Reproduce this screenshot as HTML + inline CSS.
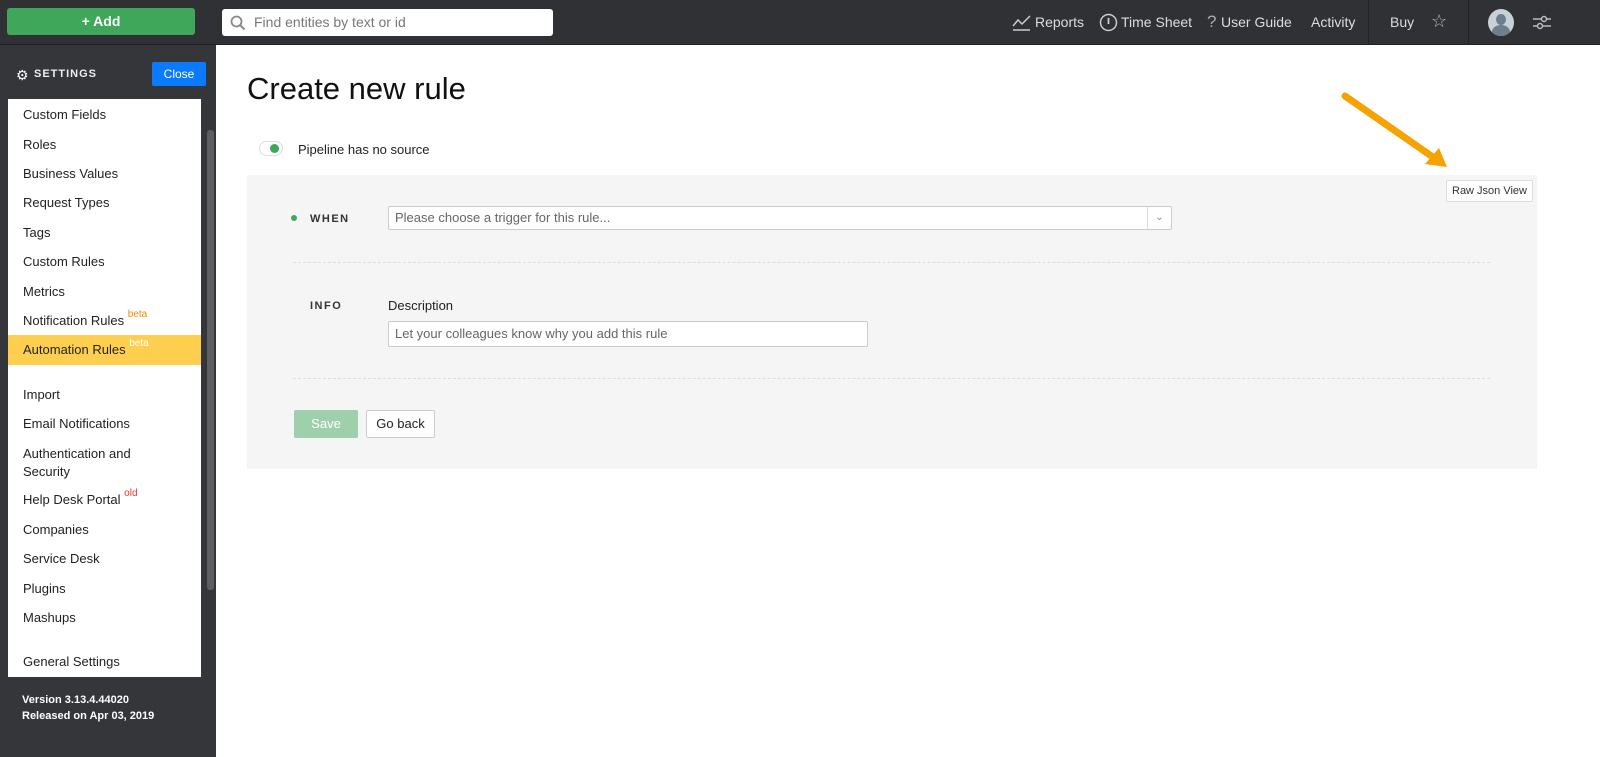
<!DOCTYPE html>
<html><head><style>
*{box-sizing:border-box;margin:0;padding:0}
body{width:1600px;height:757px;overflow:hidden;font-family:"Liberation Sans",sans-serif;font-size:13px;color:#222;background:#fff;position:relative}
.top{position:absolute;left:0;top:0;width:1600px;height:45px;background:#303135;border-bottom:1px solid #222}
.side{position:absolute;left:0;top:45px;width:216px;height:712px;background:#35363a}
.add{position:absolute;left:7px;top:8px;width:188px;height:27px;background:#3fa75a;border-radius:3px;color:#fff;font-weight:bold;font-size:14px;text-align:center;line-height:27px}
.search{position:absolute;left:222px;top:9px;width:331px;height:27px;background:#fff;border-radius:3px;color:#777;font-size:14px;line-height:27px;padding-left:32px}
.nav{position:absolute;top:14px;color:#ddd;font-size:14px}
.vsep{position:absolute;top:0;width:1px;height:44px;background:#222}
.menu{position:absolute;left:8px;top:99px;width:193px;height:578px;background:#fff}
.menu div{position:absolute;left:15px;font-size:13px;color:#222}
.sup{font-size:10px;vertical-align:top;position:relative;top:-4px}
.main{position:absolute;left:216px;top:45px;width:1384px;height:712px}
.panel{position:absolute;left:247px;top:175px;width:1290px;height:294px;background:#f4f5f4}
.lbl{position:absolute;font-size:11px;font-weight:bold;letter-spacing:1.5px;color:#333}
.inp{position:absolute;background:#fff;border:1px solid #ccc;border-radius:2px;font-size:13px;color:#666;padding-left:6px;line-height:22px}
.dash{position:absolute;left:293px;width:1197px;border-top:1px dashed #ddd}
</style></head><body>
<div class="top"></div>
<div class="side"></div>
<div class="add">+ Add</div>
<div class="search">Find entities by text or id
<svg style="position:absolute;left:8px;top:6px" width="16" height="16" viewBox="0 0 16 16"><circle cx="6.5" cy="6.5" r="5" fill="none" stroke="#888" stroke-width="1.8"/><path d="M10 10l4.5 4.5" stroke="#888" stroke-width="2"/></svg></div>
<svg style="position:absolute;left:1012px;top:14px" width="20" height="18"><path d="M1 12 L6 6 L10 10 L18 2" fill="none" stroke="#ccc" stroke-width="1.5"/><path d="M1 16H18" stroke="#ccc" stroke-width="1.5"/></svg>
<div class="nav" style="left:1035px">Reports</div>
<svg style="position:absolute;left:1099px;top:13px" width="19" height="19"><circle cx="9.5" cy="9.5" r="8" fill="none" stroke="#ccc" stroke-width="1.5"/><path d="M9.5 5v6" stroke="#ccc" stroke-width="1.8"/></svg>
<div class="nav" style="left:1121px">Time Sheet</div>
<div class="nav" style="left:1207px;font-size:17px;top:12px;color:#aaa">?</div>
<div class="nav" style="left:1221px">User Guide</div>
<div class="nav" style="left:1311px">Activity</div>
<div class="vsep" style="left:1368px"></div>
<div class="nav" style="left:1390px">Buy</div>
<div class="nav" style="left:1431px;font-size:18px;top:11px;color:#bbb">☆</div>
<div class="vsep" style="left:1468px"></div>
<div style="position:absolute;left:1488px;top:9px;width:26px;height:27px;border-radius:50%;background:#c8d0d8;overflow:hidden"><div style="position:absolute;left:8px;top:5px;width:10px;height:11px;border-radius:50%;background:#6e7e8c"></div><div style="position:absolute;left:4px;top:16px;width:18px;height:14px;border-radius:50%;background:#6e7e8c"></div></div>
<svg style="position:absolute;left:1532px;top:12px" width="20" height="20"><path d="M1 7H19M1 14H19" stroke="#bbb" stroke-width="1.5"/><circle cx="12" cy="7" r="2.5" fill="#303135" stroke="#bbb" stroke-width="1.5"/><circle cx="8" cy="14" r="2.5" fill="#303135" stroke="#bbb" stroke-width="1.5"/></svg>

<div style="position:absolute;left:16px;top:67px;color:#fff;font-size:14px">⚙</div>
<div style="position:absolute;left:34px;top:68px;color:#eee;font-size:11px;font-weight:bold;letter-spacing:1px">SETTINGS</div>
<div style="position:absolute;left:152px;top:62px;width:54px;height:24px;background:#0a7bff;border-radius:2px;color:#fff;font-size:12px;text-align:center;line-height:24px">Close</div>
<div class="menu">
<div style="top:8px">Custom Fields</div>
<div style="top:38px">Roles</div>
<div style="top:67px">Business Values</div>
<div style="top:96px">Request Types</div>
<div style="top:126px">Tags</div>
<div style="top:155px">Custom Rules</div>
<div style="top:185px">Metrics</div>
<div style="top:214px">Notification Rules <span class="sup" style="color:#f28b00">beta</span></div>
<div style="top:236px;left:0;width:193px;height:30px;background:#fecf4f"></div>
<div style="top:243px">Automation Rules <span class="sup" style="color:#fff">beta</span></div>
<div style="top:288px">Import</div>
<div style="top:317px">Email Notifications</div>
<div style="top:346px;line-height:18px">Authentication and<br>Security</div>
<div style="top:393px">Help Desk Portal <span class="sup" style="color:#e33">old</span></div>
<div style="top:423px">Companies</div>
<div style="top:452px">Service Desk</div>
<div style="top:482px">Plugins</div>
<div style="top:511px">Mashups</div>
<div style="top:555px">General Settings</div>
</div>
<div style="position:absolute;left:207px;top:130px;width:7px;height:460px;background:#5d5e62;border-radius:3px"></div>
<div style="position:absolute;left:22px;top:692px;color:#fff;font-size:11px;font-weight:bold;line-height:16px">Version 3.13.4.44020<br>Released on Apr 03, 2019</div>

<div style="position:absolute;left:247px;top:71px;font-size:31px;color:#111">Create new rule</div>
<div style="position:absolute;left:259px;top:141px;width:24px;height:15px;border-radius:8px;background:#fff;border:1px solid #ddd"><div style="position:absolute;left:10px;top:2px;width:9px;height:9px;border-radius:50%;background:#3fa75a"></div></div>
<div style="position:absolute;left:298px;top:142px;font-size:13px">Pipeline has no source</div>
<div class="panel"></div>
<div style="position:absolute;left:1446px;top:180px;width:87px;height:22px;background:#fff;border:1px solid #ddd;border-radius:2px;font-size:11px;text-align:center;line-height:20px;color:#333">Raw Json View</div>
<svg style="position:absolute;left:1335px;top:88px" width="120" height="90"><path d="M10 8 L105 74" stroke="#f6a200" stroke-width="7" stroke-linecap="round"/><path d="M112 79 L90 76 L104 60 Z" fill="#f6a200"/></svg>
<div style="position:absolute;left:291px;top:215px;width:6px;height:6px;border-radius:50%;background:#3fa75a"></div>
<div class="lbl" style="left:310px;top:213px">WHEN</div>
<div class="inp" style="left:388px;top:206px;width:784px;height:24px">Please choose a trigger for this rule...<div style="position:absolute;right:0;top:0;width:24px;height:22px;border-left:1px solid #ddd;color:#888;text-align:center;font-size:10px">⌄</div></div>
<div class="dash" style="top:262px"></div>
<div class="lbl" style="left:310px;top:300px">INFO</div>
<div style="position:absolute;left:388px;top:298px;font-size:13px">Description</div>
<div class="inp" style="left:388px;top:321px;width:480px;height:26px;line-height:24px">Let your colleagues know why you add this rule</div>
<div class="dash" style="top:378px"></div>
<div style="position:absolute;left:294px;top:410px;width:64px;height:28px;background:#9fd0ac;border-radius:2px;color:#fff;text-align:center;line-height:28px">Save</div>
<div style="position:absolute;left:366px;top:410px;width:69px;height:28px;background:#fff;border:1px solid #ccc;border-radius:2px;text-align:center;line-height:26px">Go back</div>
</body></html>
